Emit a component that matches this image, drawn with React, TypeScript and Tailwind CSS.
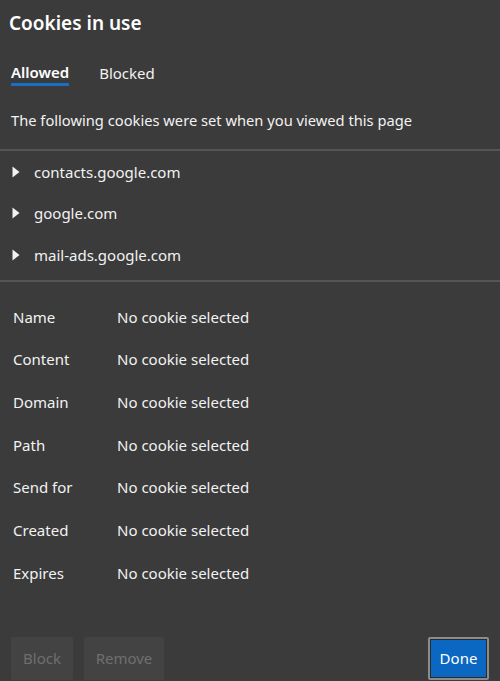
import React from 'react';

const sites = ['contacts.google.com', 'google.com', 'mail-ads.google.com'];
const fields = ['Name', 'Content', 'Domain', 'Path', 'Send for', 'Created', 'Expires'];

const Caret: React.FC = () => (
  <svg width="8" height="12" viewBox="0 0 8 12" className="shrink-0">
    <path d="M0.5 0.5 L7.5 6 L0.5 11.5 Z" fill="#f2f2f2" />
  </svg>
);

const App: React.FC = () => {
  return (
    <div
      className="w-[500px] h-[681px] bg-[#3b3b3b] text-[#f2f2f2] flex flex-col overflow-hidden"
      style={{ fontFamily: '"Noto Sans", "Open Sans", sans-serif' }}
    >
      {/* header */}
      <h1 className="px-[9px] pt-[9px] text-[19px] leading-[28px] font-semibold text-white">
        Cookies in use
      </h1>

      {/* tabs */}
      <div className="flex px-[11px] mt-[26px] gap-[30px] text-[15px]">
        <div className="flex flex-col">
          <span className="leading-[19px] font-semibold text-white">Allowed</span>
          <span className="h-[3px] bg-[#1a6fc4] mt-[1px]" />
        </div>
        <span className="leading-[19px] mt-[1px]">Blocked</span>
      </div>

      <p className="px-[11px] mt-[24px] text-[14.7px] leading-[20px]">
        The following cookies were set when you viewed this page
      </p>

      <div className="mt-[19px] h-[2px] bg-[#555555]" />

      {/* sites */}
      <ul className="pb-[4px]">
        {sites.map(site => (
          <li key={site} className="h-[41.5px] flex items-center pl-[12px] gap-[14px] text-[15px]">
            <Caret />
            <span>{site}</span>
          </li>
        ))}
      </ul>

      <div className="h-[2px] bg-[#555555]" />

      {/* details */}
      <div className="pt-[14px] px-[13px]">
        {fields.map(f => (
          <div key={f} className="h-[42.67px] flex items-center text-[15px]">
            <span className="w-[104px]">{f}</span>
            <span>No cookie selected</span>
          </div>
        ))}
      </div>

      <div className="flex-1" />

      {/* footer */}
      <div className="flex items-end px-[11px] pb-[1px]">
        <button className="w-[62px] h-[43px] bg-[#434343] text-[#6f6f6f] text-[15px] rounded-[2px]">
          Block
        </button>
        <button className="ml-[11px] w-[80px] h-[43px] bg-[#434343] text-[#6f6f6f] text-[15px] rounded-[2px]">
          Remove
        </button>
        <div className="flex-1" />
        <button className="w-[61px] h-[43px] border-2 border-[#8c8c8c] rounded-[2px] p-[1px] bg-[#2a2a2a]">
          <span className="flex items-center justify-center w-full h-full bg-[#0a67c2] text-white text-[15px]">
            Done
          </span>
        </button>
      </div>
    </div>
  );
};

export default App;
